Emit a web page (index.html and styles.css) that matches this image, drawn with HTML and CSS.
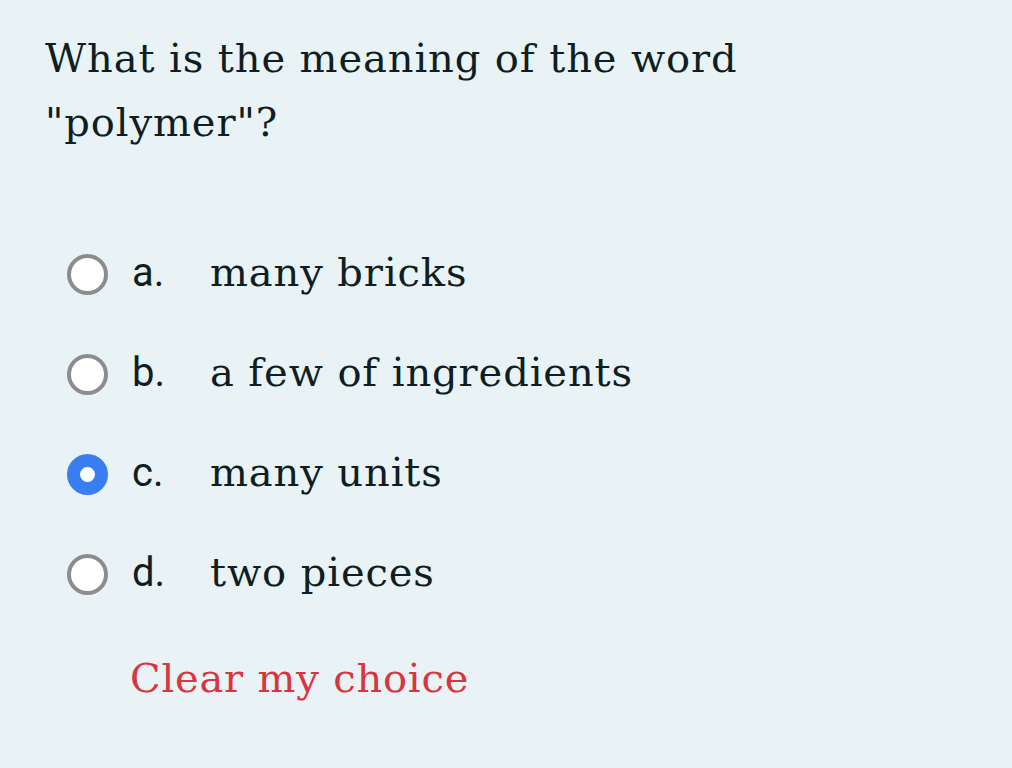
FILE: index.html
```html
<!DOCTYPE html>
<html>
<head>
<meta charset="utf-8">
<link rel="stylesheet" href="styles.css">
</head>
<body>
<div class="q">
  <div class="qtext">What is the meaning of the word "polymer"?</div>
  <div class="answers">
    <div class="opt"><span class="radio"></span><span class="letter">a.</span><span class="label">many bricks</span></div>
    <div class="opt"><span class="radio"></span><span class="letter">b.</span><span class="label">a few of ingredients</span></div>
    <div class="opt"><span class="radio checked"></span><span class="letter">c.</span><span class="label">many units</span></div>
    <div class="opt"><span class="radio"></span><span class="letter">d.</span><span class="label">two pieces</span></div>
  </div>
  <div class="clear">Clear my choice</div>
</div>
</body>
</html>
```
FILE: styles.css
```css
html, body { margin: 0; padding: 0; }
body {
  background: #e9f2f5;
  width: 1012px;
  height: 768px;
  overflow: hidden;
  color: #0e1e22;
  font-family: "DejaVu Serif", serif;
}
.q { padding: 26px 0 0 45px; }
.qtext {
  font-size: 40px;
  line-height: 64px;
  letter-spacing: 0.9px;
  width: 740px;
}
.answers { margin-top: 68px; display: flex; flex-direction: column; }
.opt {
  display: flex;
  align-items: center;
  height: 100px;
  padding-left: 22px;
}
.radio {
  width: 41px; height: 41px;
  box-sizing: border-box;
  border: 4px solid #8c8c8e;
  border-radius: 50%;
  background: #fff;
  flex: none;
  margin-top: 4px;
}
.radio.checked {
  border: 13.5px solid #3a7ff2;
}
.letter {
  font-family: Roboto, sans-serif;
  font-size: 40px;
  width: 78px;
  margin-left: 24px;
}
.label { font-size: 40px; letter-spacing: 0.9px; }
.clear {
  color: #d9353f;
  font-size: 40px;
  letter-spacing: 0.8px;
  margin: 33px 0 0 85px;
}
```
